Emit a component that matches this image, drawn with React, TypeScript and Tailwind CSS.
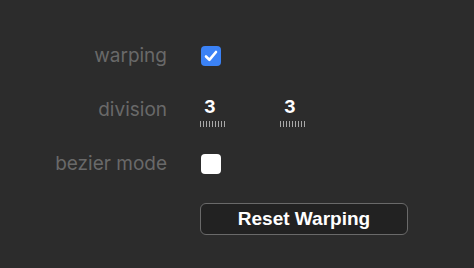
import React from "react";

const font = { fontFamily: '"Liberation Sans", Arial, sans-serif' };
const labelFont = { fontFamily: 'Inter, "Liberation Sans", sans-serif' };

const Ticks = () => (
  <div className="flex gap-[2px]">
    {Array.from({ length: 9 }).map((_, i) => (
      <span key={i} className="block h-[6px] w-[1px] bg-[#a8a8a8]" />
    ))}
  </div>
);

const Stepper = ({ value }: { value: number }) => (
  <div className="flex w-[28px] flex-col items-start">
    <span className="ml-[4px] text-[18px] font-bold leading-[20px] text-white" style={labelFont}>
      {value}
    </span>
    <div className="mt-[4px]">
      <Ticks />
    </div>
  </div>
);

export default function App() {
  return (
    <div className="h-[268px] w-[474px] bg-[#2c2c2c] pt-[29px]" style={font}>
      <div className="grid grid-cols-[167px_1fr] gap-x-[33px]">
        <div className="flex h-[54px] items-center justify-end text-[19px] text-[#696969]" style={labelFont}>warping</div>
        <div className="flex h-[54px] items-center">
          <div className="ml-[1px] flex h-[20px] w-[20px] items-center justify-center rounded-[4px] bg-[#3b82f6]">
            <svg width="16" height="16" viewBox="0 0 16 16" fill="none">
              <path d="M3 8.5 L6.4 11.8 L13 4" stroke="white" strokeWidth="2.6" strokeLinecap="round" strokeLinejoin="round" />
            </svg>
          </div>
        </div>

        <div className="flex h-[54px] items-center justify-end text-[19px] text-[#696969]" style={labelFont}>division</div>
        <div className="flex h-[54px] items-center gap-[52px] pt-[3px]">
          <Stepper value={3} />
          <Stepper value={3} />
        </div>

        <div className="flex h-[54px] items-center justify-end text-[19px] text-[#696969]" style={labelFont}>bezier mode</div>
        <div className="flex h-[54px] items-center">
          <div className="ml-[1px] h-[20px] w-[20px] rounded-[4px] bg-white" />
        </div>

        <div />
        <div className="pt-[12px]">
          <button className="flex h-[32px] w-[208px] items-center justify-center rounded-[6px] border border-[#6a6a6a] bg-[#222222] text-[19px] font-semibold text-white">
            Reset Warping
          </button>
        </div>
      </div>
    </div>
  );
}
